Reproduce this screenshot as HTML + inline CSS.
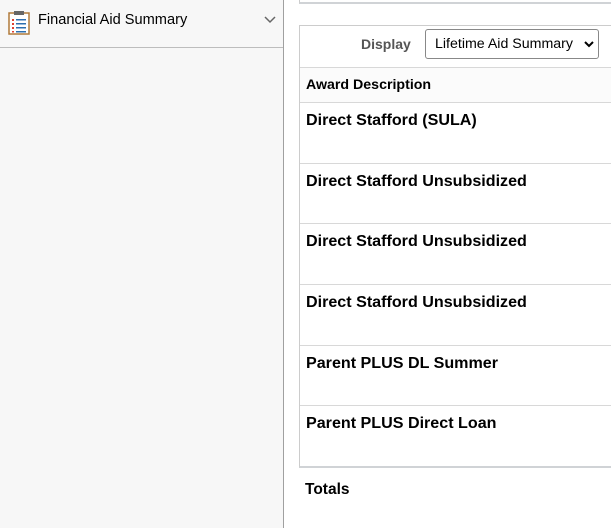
<!DOCTYPE html>
<html><head><style>
*{margin:0;padding:0;box-sizing:border-box}
body{width:611px;height:528px;overflow:hidden;background:#fff;font-family:"Liberation Sans",Arial,sans-serif;position:relative}
#left{position:absolute;left:0;top:0;width:284px;height:528px;background:#f7f7f7;border-right:1px solid #a0a0a0}
#hdr{position:absolute;left:0;top:0;width:283px;height:48px;border-bottom:1px solid #bdbdbd}
#hdr .t{position:absolute;left:38px;top:12px;font-size:14.6px;color:#000}
#topbox{position:absolute;left:299px;top:-2px;width:320px;height:6px;border:1px solid #ccc;border-top:none;border-bottom:2px solid #d0d3d6}
#panel{position:absolute;left:299px;top:25px;width:320px;height:443px;border:1px solid #ccc;border-bottom:2px solid #d0d3d6}
.disp{position:absolute;left:61px;top:10px;font-size:14px;font-weight:bold;color:#555}
.sel{position:absolute;left:125px;top:3px;width:174px;height:30px;border:1px solid #888;border-radius:3px;font-size:14.2px;padding:6px 0 0 9px;color:#000;white-space:nowrap}
.row{position:absolute;left:0;width:320px;border-top:1px solid #d8d8d8;font-size:16.1px;font-weight:bold;padding:8px 0 0 6px;color:#000}
.h{background:#fbfbfb;font-size:14.2px;padding-top:9px}
</style></head><body>
<div id="left"><div id="hdr">
<svg style="position:absolute;left:8px;top:10px" width="22" height="25" viewBox="0 0 22 25">
<rect x="1" y="3" width="20" height="21" fill="#fff" stroke="#b07a3a" stroke-width="1.5"/>
<rect x="6" y="1" width="10" height="4" fill="#666"/>
<g fill="#e04030"><rect x="4" y="9" width="2" height="2"/><rect x="4" y="13" width="2" height="2"/><rect x="4" y="17" width="2" height="2"/><rect x="4" y="21" width="2" height="1.5"/></g>
<g fill="#2c6fb0"><rect x="8" y="9" width="10" height="1.5"/><rect x="8" y="13" width="10" height="1.5"/><rect x="8" y="17" width="10" height="1.5"/><rect x="8" y="21" width="10" height="1.5"/></g>
</svg>
<div class="t">Financial Aid Summary</div>
<svg style="position:absolute;left:264px;top:16px" width="12" height="8" viewBox="0 0 12 8"><path d="M1 1l5 5 5-5" fill="none" stroke="#666" stroke-width="1.5"/></svg>
</div></div>
<div id="topbox"></div>
<div id="panel">
<div class="disp">Display</div>
<div class="sel">Lifetime Aid Summary<svg style="position:absolute;left:158px;top:11px" width="10" height="7" viewBox="0 0 10 7"><path d="M1 1l4 4 4-4" fill="none" stroke="#000" stroke-width="2"/></svg></div>
<div class="row h" style="top:41px;height:36px">Award Description</div>
<div class="row" style="top:76px;height:61px">Direct Stafford (SULA)</div>
<div class="row" style="top:137px;height:60px">Direct Stafford Unsubsidized</div>
<div class="row" style="top:197px;height:61px">Direct Stafford Unsubsidized</div>
<div class="row" style="top:258px;height:61px">Direct Stafford Unsubsidized</div>
<div class="row" style="top:319px;height:60px">Parent PLUS DL Summer</div>
<div class="row" style="top:379px;height:61px">Parent PLUS Direct Loan</div>
</div>
<div style="position:absolute;left:305px;top:481px;font-size:15.5px;font-weight:bold">Totals</div>
</body></html>
